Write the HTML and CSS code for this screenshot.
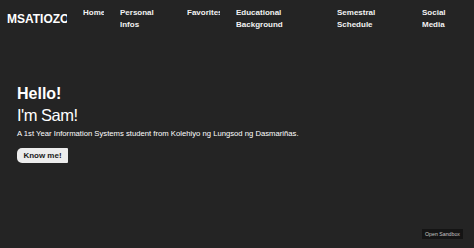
FILE: index.html
```html
<!DOCTYPE html>
<html>
<head>
<meta charset="utf-8">
<link rel="stylesheet" href="styles.css">
</head>
<body>
<header class="nav">
  <div class="logo">MSATIOZONA</div>
  <ul class="links">
    <li>Home</li>
    <li>Personal Infos</li>
    <li>Favorites</li>
    <li>Educational Background</li>
    <li>Semestral Schedule</li>
    <li>Social Media</li>
  </ul>
</header>
<main class="hero">
  <h1 class="hello">Hello!</h1>
  <h2 class="name">I'm Sam!</h2>
  <p class="desc">A 1st Year Information Systems student from Kolehiyo ng Lungsod ng Dasmariñas.</p>
  <button class="btn">Know me!</button>
</main>
<div class="sandbox">Open Sandbox</div>
</body>
</html>
```
FILE: styles.css
```css
html, body {
  margin: 0;
  padding: 0;
  background: #242424;
  color: #ffffff;
  font-family: "Liberation Sans", Arial, sans-serif;
  height: 100%;
  overflow: hidden;
}
.nav {
  display: flex;
  align-items: flex-start;
  padding: 6.5px 0 0 7px;
  height: 29.5px;
}
.logo {
  width: 60px;
  overflow: hidden;
  white-space: nowrap;
  font-weight: bold;
  font-size: 12px;
  margin-top: 5.5px;
}
.links {
  list-style: none;
  margin: 0 0 0 16px;
  padding: 0;
  display: grid;
  grid-template-columns: 21px 51px 33px 85px 69px 45px;
  column-gap: 16px;
  font-size: 8px;
  font-weight: bold;
  line-height: 12px;
  color: #f2f2f2;
}
.links li {
  overflow: hidden;
}
.hero {
  padding: 48px 0 0 17px;
}
.hello {
  margin: 0;
  font-size: 16px;
  line-height: 20px;
  font-weight: bold;
}
.name {
  margin: 0;
  font-size: 16.5px;
  line-height: 23px;
  letter-spacing: -0.5px;
  font-weight: normal;
}
.desc {
  margin: 2px 0 8.5px;
  font-size: 7.7px;
  line-height: 10px;
}
.btn {
  display: block;
  font-family: "Liberation Sans", Arial, sans-serif;
  font-weight: bold;
  font-size: 8px;
  white-space: nowrap;
  background: #ececec;
  color: #1a1a1a;
  border: none;
  border-radius: 5px 1px 1px 5px;
  padding: 0;
  height: 15px;
  width: 51px;
  text-align: center;
}
.sandbox {
  position: fixed;
  right: 11px;
  bottom: 9px;
  background: #141414;
  color: #c4c4c4;
  font-size: 5.25px;
  line-height: 10px;
  padding: 0 3px;
}
```
